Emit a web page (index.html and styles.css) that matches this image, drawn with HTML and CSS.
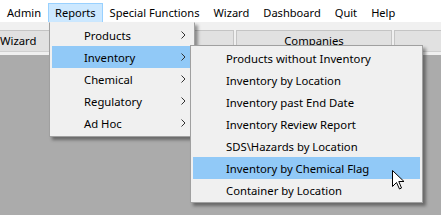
FILE: index.html
```html
<!DOCTYPE html>
<html>
<head>
<meta charset="utf-8">
<link rel="stylesheet" href="styles.css">
</head>
<body>
<div class="screen">
  <div class="menubar">
    <span class="mi">Admin</span>
    <span class="mi open">Reports</span>
    <span class="mi">Special Functions</span>
    <span class="mi">Wizard</span>
    <span class="mi">Dashboard</span>
    <span class="mi">Quit</span>
    <span class="mi">Help</span>
  </div>
  <div class="tabstrip">
    <div class="tab t1">Wizard</div>
    <div class="tab t2"></div>
    <div class="tab t3">Companies</div>
    <div class="tab t4"></div>
  </div>
  <div class="workspace"></div>

  <div class="menu m1">
    <div class="item"><span>Products</span><svg class="chev" width="5" height="8" viewBox="0 0 5 8"><path d="M0.5 0.5 L4 4 L0.5 7.5" fill="none" stroke="#333" stroke-width="1"/></svg></div>
    <div class="item hl"><span>Inventory</span><svg class="chev" width="5" height="8" viewBox="0 0 5 8"><path d="M0.5 0.5 L4 4 L0.5 7.5" fill="none" stroke="#333" stroke-width="1"/></svg></div>
    <div class="item"><span>Chemical</span><svg class="chev" width="5" height="8" viewBox="0 0 5 8"><path d="M0.5 0.5 L4 4 L0.5 7.5" fill="none" stroke="#333" stroke-width="1"/></svg></div>
    <div class="item"><span>Regulatory</span><svg class="chev" width="5" height="8" viewBox="0 0 5 8"><path d="M0.5 0.5 L4 4 L0.5 7.5" fill="none" stroke="#333" stroke-width="1"/></svg></div>
    <div class="item"><span>Ad Hoc</span><svg class="chev" width="5" height="8" viewBox="0 0 5 8"><path d="M0.5 0.5 L4 4 L0.5 7.5" fill="none" stroke="#333" stroke-width="1"/></svg></div>
  </div>

  <div class="menu m2">
    <div class="item"><span>Products without Inventory</span></div>
    <div class="item"><span>Inventory by Location</span></div>
    <div class="item"><span>Inventory past End Date</span></div>
    <div class="item"><span>Inventory Review Report</span></div>
    <div class="item"><span>SDS\Hazards by Location</span></div>
    <div class="item hl"><span>Inventory by Chemical Flag</span></div>
    <div class="item"><span>Container by Location</span></div>
  </div>

  <svg class="cursor" width="13" height="20" viewBox="0 0 13 20">
    <path d="M0.5 0.5 L0.5 16.5 L4.5 12.5 L7.5 19 L9.5 18 L6.8 11.5 L12 11.5 Z" fill="#fff" stroke="#000" stroke-width="1" stroke-linejoin="miter"/>
  </svg>
</div>
</body>
</html>
```
FILE: styles.css
```css
html, body {
  margin: 0;
  padding: 0;
}
body {
  width: 441px;
  height: 215px;
  overflow: hidden;
  font-family: "Segoe UI", "Noto Sans", "Open Sans", sans-serif;
  font-size: 11.3px;
  color: #000;
}
.screen {
  position: relative;
  width: 441px;
  height: 215px;
  overflow: hidden;
  display: flex;
  flex-direction: column;
  background: #ababab;
}
.menubar {
  height: 22px;
  background: #fff;
  display: flex;
  align-items: flex-end;
  flex: none;
}
.mi {
  height: 19px;
  line-height: 18px;
  padding: 0 6px;
  box-sizing: border-box;
  border: 1px solid transparent;
  border-bottom: none;
  white-space: nowrap;
  font-size: 11.1px;
}
.mi.open {
  background: #cce8ff;
  border-color: #99d1ff;
}
.tabstrip {
  flex: none;
  height: 31px;
  background: #f0f0f0;
  display: flex;
  gap: 2px;
  padding-top: 8px;
  box-sizing: border-box;
}
.tab {
  height: 22px;
  box-sizing: border-box;
  background: #e1e1e1;
  border: 1px solid #c4c4c4;
  border-bottom-color: #d0d0d0;
  line-height: 20px;
  white-space: nowrap;
  flex: none;
}
.t1 { width: 118px; margin-left: -3px; padding-left: 3px; border-left: none; }
.t2 { width: 117px; }
.t3 { width: 156px; text-align: center; }
.t4 { width: 60px; }
.workspace {
  flex: 1;
  background: #ababab;
  border-top: 2px solid #f0f0f0;
}
.menu {
  position: absolute;
  background: #f0f0f0;
  border: 1px solid #a0a0a0;
  padding: 1px 2px 2px 2px;
  box-sizing: border-box;
  box-shadow: 3px 3px 3px rgba(0, 0, 0, 0.38);
}
.m1 {
  left: 49px;
  top: 22px;
  width: 146px;
  height: 115px;
  border-top-color: #f0f0f0;
}
.m2 {
  left: 190px;
  top: 45px;
  width: 233px;
  height: 158px;
}
.item {
  height: 22px;
  display: flex;
  align-items: center;
  white-space: nowrap;
  position: relative;
}
.m1 .item { padding-left: 32px; }
.m2 .item { padding-left: 33px; }
.item.hl { background: #91c9f7; }
.chev {
  position: absolute;
  left: 129px;
  top: 7px;
}
.cursor {
  position: absolute;
  left: 392px;
  top: 170px;
}
```
